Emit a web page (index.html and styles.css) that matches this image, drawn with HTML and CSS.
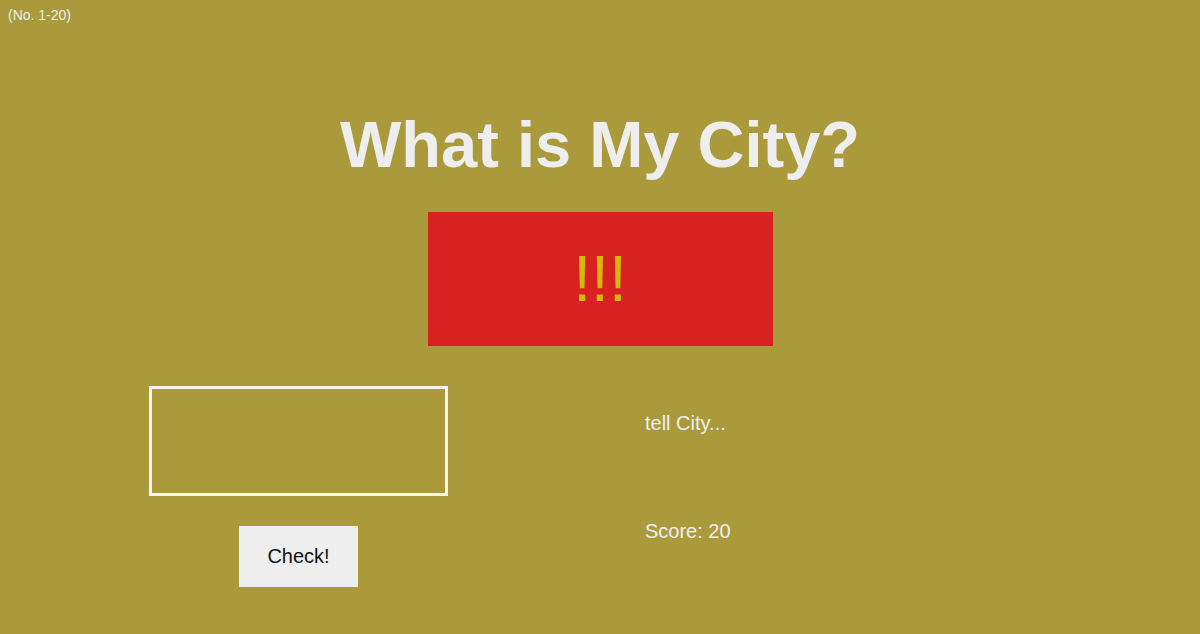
FILE: index.html
```html
<!DOCTYPE html>
<html lang="en">
<head>
<meta charset="utf-8">
<title>What is My City?</title>
<link rel="stylesheet" href="styles.css">
</head>
<body>
<div class="label">(No. 1-20)</div>
<h1 class="title">What is My City?</h1>
<div class="secret">!!!</div>
<section class="game">
  <div class="left">
    <input class="guess" type="text" aria-label="guess">
    <button class="check">Check!</button>
  </div>
  <div class="right">
    <p class="message">tell City...</p>
    <p class="score">Score: 20</p>
  </div>
</section>
</body>
</html>
```

FILE: styles.css
```css
html, body {
  margin: 0;
  padding: 0;
}
body {
  background: #aa9a3c;
  font-family: "Liberation Sans", Arial, sans-serif;
  color: #eeeeee;
  width: 1200px;
  height: 634px;
  overflow: hidden;
}
.label {
  padding: 7px 8px 0;
  font-size: 14px;
  line-height: 16px;
}
.title {
  margin: 86px 0 0;
  text-align: center;
  font-size: 65px;
  line-height: 72px;
  font-weight: bold;
  color: #eeeeee;
}
.secret {
  width: 345px;
  height: 134px;
  margin: 31px auto 0;
  background: #d82121;
  color: #d6b80c;
  font-size: 64px;
  display: flex;
  align-items: center;
  justify-content: center;
}
.game {
  margin-top: 40px;
  display: grid;
  grid-template-columns: 597px 603px;
}
.left {
  display: flex;
  flex-direction: column;
  align-items: center;
}
.guess {
  box-sizing: border-box;
  width: 299px;
  height: 110px;
  border: 3px solid #f4f4f4;
  background: transparent;
  margin: 0;
  padding: 0 10px;
  font-family: inherit;
  font-size: 40px;
  color: #eeeeee;
}
.check {
  margin-top: 30px;
  width: 119px;
  height: 61px;
  border: none;
  background: #eeeeee;
  color: #111111;
  font-family: inherit;
  font-size: 20px;
  padding: 0;
}
.right {
  padding-left: 48px;
}
.right p {
  margin: 0;
  font-size: 20px;
  line-height: 23px;
}
.message {
  padding-top: 26px;
}
.score {
  padding-top: 85px;
}
```
